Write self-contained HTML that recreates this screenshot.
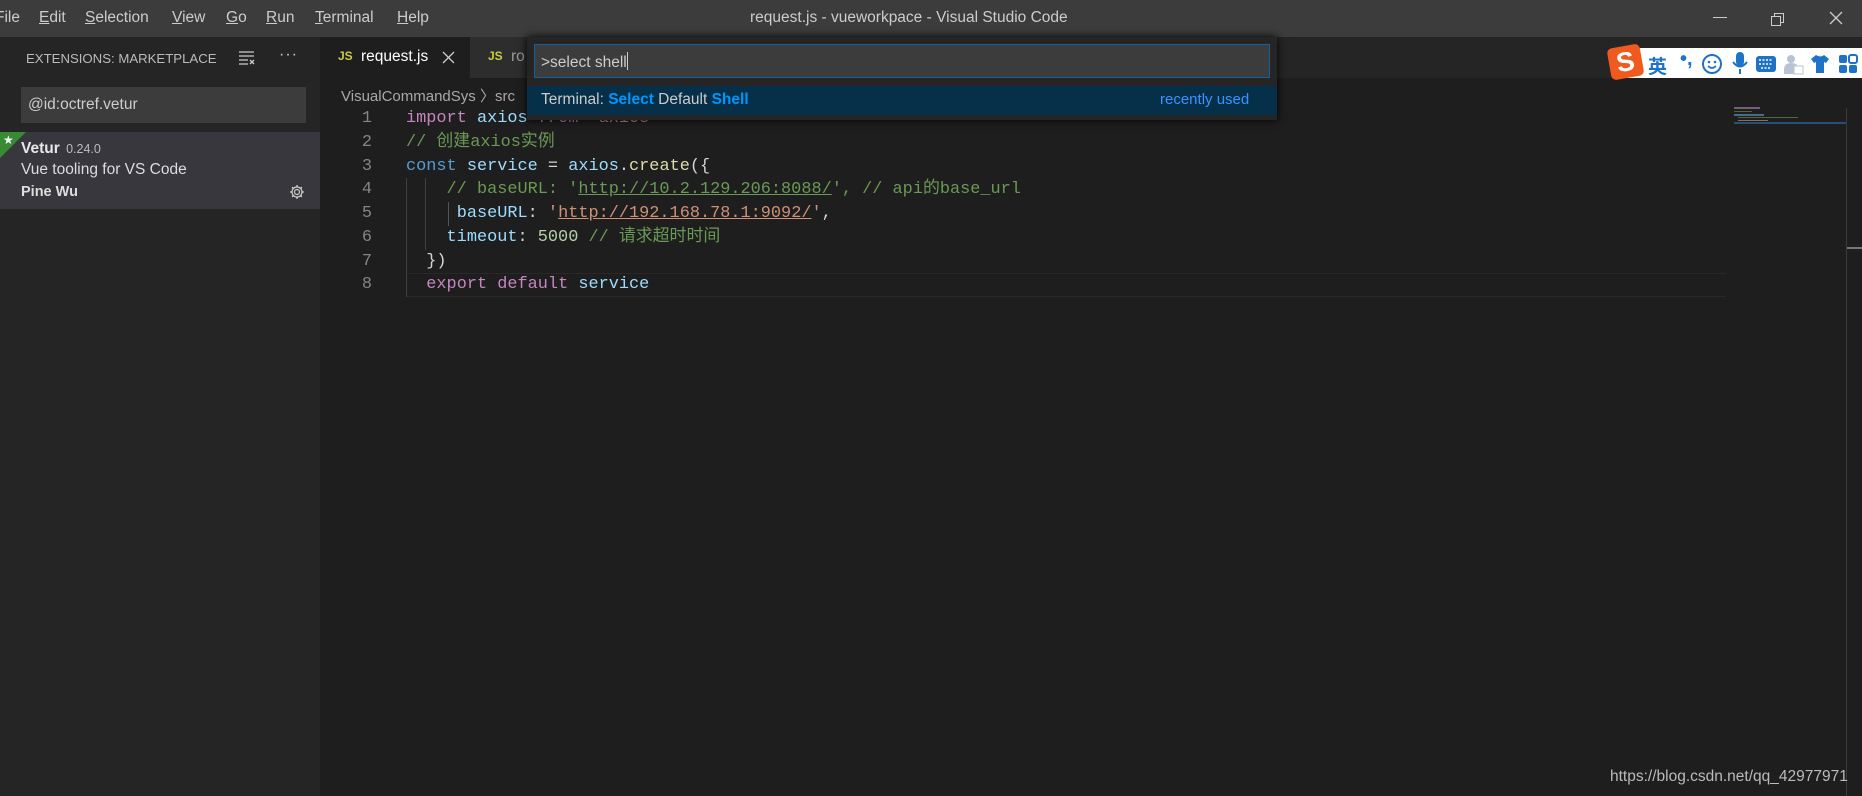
<!DOCTYPE html>
<html><head><meta charset="utf-8"><style>
*{margin:0;padding:0;box-sizing:border-box}
body{width:1862px;height:796px;overflow:hidden;background:#1e1e1e;font-family:"Liberation Sans","Noto Sans CJK SC",sans-serif;position:relative;color:#ccc}
.a{position:absolute;white-space:nowrap}
.code{font-family:"Liberation Mono","Noto Sans CJK SC",monospace;font-size:16.9px;line-height:24px;white-space:pre}
.ln{color:#858585;width:40px;text-align:right;left:332px}
.k{color:#c586c0}.v{color:#9cdcfe}.c{color:#6a9955}.b{color:#569cd6}.s{color:#ce9178}.n{color:#b5cea8}.w{color:#d4d4d4}.f{color:#dcdcaa}
.u{text-decoration:underline}
</style></head><body>
<!-- title bar -->
<div class="a" style="left:0;top:0;width:1862px;height:37px;background:#3c3c3c"></div>
<div class="a" style="top:9px;left:-5px;font-size:15.5px;color:#ccc;word-spacing:0">
<span style="position:absolute;left:0">File</span>
<span style="position:absolute;left:44px"><u>E</u>dit</span>
<span style="position:absolute;left:90px"><u>S</u>election</span>
<span style="position:absolute;left:177px"><u>V</u>iew</span>
<span style="position:absolute;left:231px"><u>G</u>o</span>
<span style="position:absolute;left:271px"><u>R</u>un</span>
<span style="position:absolute;left:320px"><u>T</u>erminal</span>
<span style="position:absolute;left:402px"><u>H</u>elp</span>
</div>
<div class="a" style="top:9px;left:750px;width:304px;text-align:center;font-size:15.5px;color:#ccc">request.js - vueworkpace - Visual Studio Code</div>
<div class="a" style="left:1713px;top:17px;width:14px;height:1px;background:#ccc"></div>
<div class="a" style="left:1774px;top:13px;width:10px;height:10px;border:1px solid #ccc"></div>
<div class="a" style="left:1771px;top:16px;width:10px;height:10px;border:1px solid #ccc;background:#3c3c3c"></div>
<svg class="a" style="left:1828px;top:10px" width="16" height="16"><path d="M2 2L14 14M14 2L2 14" stroke="#ccc" stroke-width="1.3"/></svg>

<!-- sidebar -->
<div class="a" style="left:0;top:37px;width:320px;height:759px;background:#252526"></div>
<div class="a" style="left:26px;top:51px;font-size:13.2px;color:#bbb">EXTENSIONS: MARKETPLACE</div>
<svg class="a" style="left:239px;top:51px" width="18" height="14"><path d="M0 1h15M0 5h15M0 9h9M0 13h9M11 9l4 4M15 9l-4 4" stroke="#ccc" stroke-width="1.3"/></svg>
<div class="a" style="left:279px;top:46px;font-size:16px;color:#ccc;letter-spacing:1px">···</div>
<div class="a" style="left:21px;top:87px;width:285px;height:36px;background:#3c3c3c"></div>
<div class="a" style="left:28px;top:96px;font-size:15.5px;color:#ccc">@id:octref.vetur</div>
<div class="a" style="left:0;top:132px;width:320px;height:77px;background:#37373d"></div>
<svg class="a" style="left:0;top:132px" width="26" height="26"><path d="M0 0H26L0 26Z" fill="#388a34"/><text x="3" y="12" font-size="12" fill="#fff" font-family="DejaVu Sans">★</text></svg>
<div class="a" style="left:21px;top:140px;font-size:15.5px;color:#e7e7e7;font-weight:bold">Vetur <span style="font-weight:normal;font-size:12.5px;color:#bbb;margin-left:2px">0.24.0</span></div>
<div class="a" style="left:21px;top:161px;font-size:15.5px;color:#ddd">Vue tooling for VS Code</div>
<div class="a" style="left:21px;top:184px;font-size:14.5px;color:#ddd;font-weight:bold">Pine Wu</div>
<svg class="a" style="left:289px;top:184px" width="16" height="16" viewBox="0 0 16 16"><circle cx="8" cy="8" r="2.5" fill="none" stroke="#ccc" stroke-width="1.2"/><path d="M8 1.2v2.3M8 12.5v2.3M1.2 8h2.3M12.5 8h2.3M3.2 3.2l1.6 1.6M11.2 11.2l1.6 1.6M3.2 12.8l1.6-1.6M11.2 4.8l1.6-1.6" stroke="#ccc" stroke-width="1.6"/><circle cx="8" cy="8" r="5" fill="none" stroke="#ccc" stroke-width="1.2"/></svg>

<!-- tabs -->
<div class="a" style="left:320px;top:37px;width:1542px;height:41px;background:#252526"></div>
<div class="a" style="left:320px;top:37px;width:150px;height:41px;background:#1e1e1e"></div>
<div class="a" style="left:470px;top:37px;width:80px;height:41px;background:#2d2d2d"></div>
<div class="a" style="left:338px;top:49px;font-size:12px;color:#cbcb41;font-weight:bold">JS</div>
<div class="a" style="left:361px;top:48px;font-size:15.5px;color:#fff">request.js</div>
<svg class="a" style="left:442px;top:51px" width="13" height="13"><path d="M1 1L12 12M12 1L1 12" stroke="#ccc" stroke-width="1.3"/></svg>
<div class="a" style="left:488px;top:49px;font-size:12px;color:#cbcb41;font-weight:bold">JS</div>
<div class="a" style="left:511px;top:48px;font-size:15.5px;color:#999">ro</div>
<div class="a" style="left:341px;top:85px;font-size:15px;color:#a9a9a9">VisualCommandSys 〉src</div>

<!-- code -->
<div class="a code ln" style="top:107px">1</div>
<div class="a code ln" style="top:131px">2</div>
<div class="a code ln" style="top:155px">3</div>
<div class="a code ln" style="top:178px">4</div>
<div class="a code ln" style="top:202px">5</div>
<div class="a code ln" style="top:226px">6</div>
<div class="a code ln" style="top:250px">7</div>
<div class="a code ln" style="top:273px">8</div>
<div class="a" style="left:406px;top:273px;width:1320px;height:24px;border-top:1px solid #282828;border-bottom:1px solid #282828"></div>
<div class="a" style="left:406px;top:178px;width:1px;height:119px;background:#404040"></div>
<div class="a" style="left:425px;top:178px;width:1px;height:72px;background:#404040"></div>
<div class="a" style="left:448px;top:202px;width:1px;height:24px;background:#555"></div>
<div class="a code" style="left:406px;top:107px"><span class="k">import</span> <span class="v">axios</span> <span class="k">from</span> <span class="s">'axios'</span></div>
<div class="a code c" style="left:406px;top:131px">// 创建axios实例</div>
<div class="a code" style="left:406px;top:155px"><span class="b">const</span> <span class="v">service</span> <span class="w">=</span> <span class="v">axios</span><span class="w">.</span><span class="f">create</span><span class="w">({</span></div>
<div class="a code" style="left:406px;top:178px"><span class="c">    // baseURL: '<span class="u">http://10.2.129.206:8088/</span>', // api的base_url</span></div>
<div class="a code" style="left:406px;top:202px">     <span class="v">baseURL</span><span class="w">:</span> <span class="s">'<span class="u">http://192.168.78.1:9092/</span>'</span><span class="w">,</span></div>
<div class="a code" style="left:406px;top:226px">    <span class="v">timeout</span><span class="w">:</span> <span class="n">5000</span> <span class="c">// 请求超时时间</span></div>
<div class="a code w" style="left:406px;top:250px">  })</div>
<div class="a code" style="left:406px;top:273px">  <span class="k">export</span> <span class="k">default</span> <span class="v">service</span></div>

<!-- minimap -->
<div class="a" style="left:1734px;top:107px;width:26px;height:2px;background:#7a5a7a"></div>
<div class="a" style="left:1734px;top:111px;width:18px;height:1px;background:#4a6a3a"></div>
<div class="a" style="left:1734px;top:114px;width:30px;height:2px;background:#4a6a8a"></div>
<div class="a" style="left:1738px;top:117px;width:60px;height:1px;background:#4a6a3a"></div>
<div class="a" style="left:1738px;top:120px;width:30px;height:1px;background:#8a6a5a"></div>
<div class="a" style="left:1734px;top:122px;width:112px;height:2px;background:#264f78"></div>
<div class="a" style="left:1846px;top:108px;width:1px;height:688px;background:#3a3a3a"></div>
<div class="a" style="left:1847px;top:247px;width:15px;height:2px;background:#777"></div>

<!-- quick pick -->
<div class="a" style="left:527px;top:37px;width:750px;height:83px;background:#252526;box-shadow:0 0 8px #000"></div>
<div class="a" style="left:534px;top:44px;width:736px;height:34px;background:#3c3c3c;border:1px solid #0e639c"></div>
<div class="a" style="left:541px;top:52px;font-size:15.5px;color:#ccc">&gt;select shell<span style="display:inline-block;width:1px;height:18px;background:#ccc;vertical-align:-3px"></span></div>
<div class="a" style="left:527px;top:86px;width:750px;height:29px;background:#062f4a"></div>
<div class="a" style="left:541px;top:91px;font-size:15.5px;color:#ccc">Terminal: <b style="color:#0097fb">Select</b> Default <b style="color:#0097fb">Shell</b></div>
<div class="a" style="left:1160px;top:91px;font-size:15px;color:#3794ff">recently used</div>

<!-- sogou bar -->
<div class="a" style="left:1624px;top:48px;width:238px;height:30px;background:#fff"></div>
<div class="a" style="left:1609px;top:46px;width:33px;height:32px;background:#f05a1e;border-radius:5px;transform:rotate(-10deg);color:#fff;font-weight:bold;font-size:27px;text-align:center;line-height:32px">S</div>
<div class="a" style="left:1648px;top:52px;font-size:19px;color:#1e73c8;font-weight:bold">英</div>
<div class="a" style="left:1680px;top:48px;font-size:20px;color:#1e73c8;font-weight:bold">•,</div>
<svg class="a" style="left:1701px;top:53px" width="22" height="22"><circle cx="11" cy="11" r="9" fill="none" stroke="#1e73c8" stroke-width="2"/><circle cx="8" cy="9" r="1.3" fill="#1e73c8"/><circle cx="14" cy="9" r="1.3" fill="#1e73c8"/><path d="M7 13q4 4 8 0" fill="none" stroke="#1e73c8" stroke-width="1.6"/></svg>
<svg class="a" style="left:1731px;top:51px" width="18" height="25"><rect x="5" y="1" width="8" height="14" rx="4" fill="#1e73c8"/><path d="M2 11q7 9 14 0M9 18v5" fill="none" stroke="#1e73c8" stroke-width="2"/></svg>
<svg class="a" style="left:1755px;top:55px" width="22" height="18"><rect x="1" y="1" width="20" height="16" rx="3" fill="#1e73c8"/><path d="M4 5h14M4 9h14M6 13h10" stroke="#fff" stroke-width="1.5" stroke-dasharray="2 1.5"/></svg>
<svg class="a" style="left:1784px;top:54px" width="20" height="22"><circle cx="7" cy="5" r="4" fill="#b8c4d4"/><path d="M0 16q0-7 7-7q4 0 6 2v9H0z" fill="#b8c4d4"/><rect x="10" y="12" width="9" height="8" fill="#fff" stroke="#b8c4d4"/></svg>
<svg class="a" style="left:1810px;top:54px" width="20" height="20"><path d="M6 1L1 5l3 4 2-1v11h8V8l2 1 3-4-5-4q-3 3-8 0z" fill="#1e73c8"/></svg>
<svg class="a" style="left:1838px;top:54px" width="20" height="20"><rect x="1" y="1" width="8" height="8" rx="2" fill="#1e73c8"/><rect x="11" y="1" width="8" height="8" rx="2" fill="none" stroke="#1e73c8" stroke-width="2"/><rect x="1" y="11" width="8" height="8" rx="2" fill="#1e73c8"/><rect x="11" y="11" width="8" height="8" rx="2" fill="#1e73c8"/></svg>

<div class="a" style="left:1610px;top:768px;font-size:15.5px;color:#bbb">https://blog.csdn.net/qq_42977971</div>
</body></html>
